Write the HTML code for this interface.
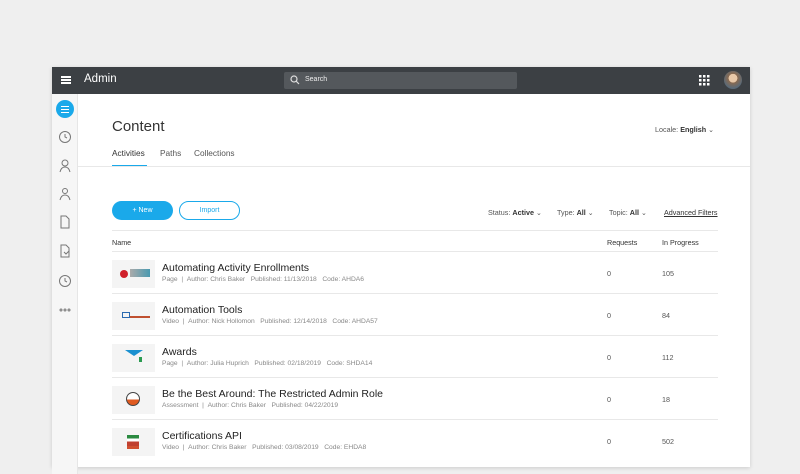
<!DOCTYPE html>
<html><head><meta charset="utf-8"><style>
*{margin:0;padding:0;box-sizing:border-box}
body{width:800px;height:451px;background:#efefef;font-family:"Liberation Sans",sans-serif;position:relative;overflow:hidden;color:#333}
.win{position:absolute;left:52px;top:67px;width:698px;height:400px;background:#fff;box-shadow:0 1px 4px rgba(0,0,0,.15)}
.top{position:absolute;left:0;top:0;width:698px;height:27px;background:#3c4044}
.side{position:absolute;left:0;top:27px;width:26px;height:380px;background:#f6f6f6;border-right:1px solid #e6e6e6}
.a{position:absolute;white-space:nowrap}
.line{position:absolute;height:1px;background:#e8e8e8}
.t{font-size:10.5px;color:#222}
.m{font-size:6.7px;color:#888}
.thumb{position:absolute;left:60px;width:43px;height:28px;background:#f4f4f4}
.num{font-size:7.2px;color:#555}
</style></head><body>
<div class="win">
<div class="top">
 <div class="a" style="left:9px;top:9px;width:10px;height:1.5px;background:#fff;box-shadow:0 3px 0 #fff,0 6px 0 #fff"></div>
 <div class="a" style="left:32px;top:6px;color:#fff;font-size:11.5px">Admin</div>
 <div class="a" style="left:232px;top:5px;width:233px;height:17px;background:#54585c;border-radius:2px"></div>
 <svg class="a" style="left:238px;top:8px" width="10" height="10"><circle cx="4" cy="4" r="3" stroke="#ddd" fill="none" stroke-width="1.2"/><line x1="6.3" y1="6.3" x2="9" y2="9" stroke="#ddd" stroke-width="1.2"/></svg>
 <div class="a" style="left:253px;top:8.5px;color:#eee;font-size:7px">Search</div>
 <svg class="a" style="left:647px;top:8px" width="11" height="11" fill="#fff"><rect x="0" y="0" width="2.5" height="2.5"/><rect x="4" y="0" width="2.5" height="2.5"/><rect x="8" y="0" width="2.5" height="2.5"/><rect x="0" y="4" width="2.5" height="2.5"/><rect x="4" y="4" width="2.5" height="2.5"/><rect x="8" y="4" width="2.5" height="2.5"/><rect x="0" y="8" width="2.5" height="2.5"/><rect x="4" y="8" width="2.5" height="2.5"/><rect x="8" y="8" width="2.5" height="2.5"/></svg>
 <div class="a" style="left:672px;top:4px;width:18px;height:18px;border-radius:50%;background:radial-gradient(circle at 50% 40%,#e8c8a8 30%,#8a6a50 32%,#5a6a78 70%)"></div>
</div>
<div class="side">
 <div class="a" style="left:4px;top:6px;width:18px;height:18px;border-radius:50%;background:#1aa9ea"></div>
 <div class="a" style="left:9px;top:12px;width:8px;height:1px;background:#fff;box-shadow:0 3px 0 #fff,0 6px 0 #fff"></div>
 <svg class="a" style="left:6px;top:36px" width="14" height="230" fill="none" stroke="#777" stroke-width="1">
  <circle cx="7" cy="7" r="5.5"/><path d="M7 4v3l2 1"/>
  <circle cx="7" cy="33" r="3"/><path d="M2 42c1-4 3-5 5-5s4 1 5 5"/>
  <circle cx="7" cy="61" r="2.5"/><path d="M2 70c1-4 3-5 5-5s4 1 5 5"/>
  <path d="M3 86h5l3 3v9H3z"/>
  <path d="M3 115h5l3 3v9H3z M6 122l2 2 3-3"/>
  <circle cx="7" cy="151" r="5.5"/><path d="M7 148v3l2 1"/>
  <circle cx="3" cy="180" r="1"/><circle cx="7" cy="180" r="1"/><circle cx="11" cy="180" r="1"/>
 </svg>
</div>
<div class="a" style="left:60px;top:51px;font-size:15px;color:#333">Content</div>
<div class="a" style="left:60px;top:81px;font-size:8.3px;color:#333">Activities</div>
<div class="a" style="left:108px;top:81px;font-size:8.3px;color:#555">Paths</div>
<div class="a" style="left:142px;top:81px;font-size:8.3px;color:#555">Collections</div>
<div class="a" style="left:60px;top:98px;width:35px;height:2px;background:#1aa9ea"></div>
<div class="line" style="left:26px;top:99px;width:672px"></div>
<div class="a" style="left:603px;top:58px;font-size:7.2px;color:#555">Locale: <b style="color:#333">English</b> ⌄</div>
<div class="a" style="left:60px;top:134px;width:61px;height:19px;border-radius:10px;background:#1aa9ea;color:#fff;font-size:7px;text-align:center;line-height:19px">+ New</div>
<div class="a" style="left:127px;top:134px;width:61px;height:19px;border-radius:10px;border:1px solid #1aa9ea;color:#1aa9ea;font-size:7px;text-align:center;line-height:17px">Import</div>
<div class="a" style="left:436px;top:141px;font-size:7.2px;color:#555">Status: <b style="color:#333">Active</b> ⌄</div>
<div class="a" style="left:505px;top:141px;font-size:7.2px;color:#555">Type: <b style="color:#333">All</b> ⌄</div>
<div class="a" style="left:557px;top:141px;font-size:7.2px;color:#555">Topic: <b style="color:#333">All</b> ⌄</div>
<div class="a" style="left:612px;top:141px;font-size:7.2px;color:#333;text-decoration:underline">Advanced Filters</div>
<div class="line" style="left:60px;top:163px;width:606px"></div>
<div class="a" style="left:60px;top:171px;font-size:7.2px;color:#333">Name</div>
<div class="a" style="left:555px;top:171px;font-size:7.2px;color:#333">Requests</div>
<div class="a" style="left:610px;top:171px;font-size:7.2px;color:#333">In Progress</div>
<div class="line" style="left:60px;top:184px;width:606px"></div>

<div class="thumb" style="top:193px"></div><div class="a" style="left:68px;top:203px;width:8px;height:8px;border-radius:50%;background:#d0202a"></div><div class="a" style="left:78px;top:202px;width:20px;height:8px;background:linear-gradient(90deg,#aaa,#4a9ab0)"></div>
<div class="a t" style="left:110px;top:195px">Automating Activity Enrollments</div>
<div class="a m" style="left:110px;top:209px">Page &nbsp;| &nbsp;Author: Chris Baker &nbsp;&nbsp;Published: 11/13/2018 &nbsp;&nbsp;Code: AHDA6</div>
<div class="a num" style="left:555px;top:202px">0</div><div class="a num" style="left:610px;top:202px">105</div>
<div class="line" style="left:60px;top:226px;width:606px"></div>

<div class="thumb" style="top:235px"></div><div class="a" style="left:70px;top:245px;width:8px;height:6px;border:1.5px solid #2a6ab0"></div><div class="a" style="left:78px;top:249px;width:20px;height:2px;background:#c05030"></div>
<div class="a t" style="left:110px;top:237px">Automation Tools</div>
<div class="a m" style="left:110px;top:251px">Video &nbsp;| &nbsp;Author: Nick Hollomon &nbsp;&nbsp;Published: 12/14/2018 &nbsp;&nbsp;Code: AHDA57</div>
<div class="a num" style="left:555px;top:244px">0</div><div class="a num" style="left:610px;top:244px">84</div>
<div class="line" style="left:60px;top:268px;width:606px"></div>

<div class="thumb" style="top:277px"></div><div class="a" style="left:73px;top:283px;width:0;height:0;border-left:9px solid transparent;border-right:9px solid transparent;border-bottom:6px solid #1a90d0;transform:rotate(180deg)"></div><div class="a" style="left:87px;top:290px;width:3px;height:5px;background:#2a9a50"></div>
<div class="a t" style="left:110px;top:279px">Awards</div>
<div class="a m" style="left:110px;top:293px">Page &nbsp;| &nbsp;Author: Julia Huprich &nbsp;&nbsp;Published: 02/18/2019 &nbsp;&nbsp;Code: SHDA14</div>
<div class="a num" style="left:555px;top:286px">0</div><div class="a num" style="left:610px;top:286px">112</div>
<div class="line" style="left:60px;top:310px;width:606px"></div>

<div class="thumb" style="top:319px"></div><div class="a" style="left:74px;top:325px;width:14px;height:14px;border-radius:50%;border:1.5px solid #444;background:linear-gradient(0deg,#e05a20 45%,#fff 45%)"></div>
<div class="a t" style="left:110px;top:321px">Be the Best Around: The Restricted Admin Role</div>
<div class="a m" style="left:110px;top:335px">Assessment &nbsp;| &nbsp;Author: Chris Baker &nbsp;&nbsp;Published: 04/22/2019</div>
<div class="a num" style="left:555px;top:328px">0</div><div class="a num" style="left:610px;top:328px">18</div>
<div class="line" style="left:60px;top:352px;width:606px"></div>

<div class="thumb" style="top:361px"></div><div class="a" style="left:75px;top:368px;width:12px;height:14px;border-bottom:3px solid #d05030;background:linear-gradient(#2a8a40 30%,#fff 30%,#fff 60%,#c04030 60%)"></div>
<div class="a t" style="left:110px;top:363px">Certifications API</div>
<div class="a m" style="left:110px;top:377px">Video &nbsp;| &nbsp;Author: Chris Baker &nbsp;&nbsp;Published: 03/08/2019 &nbsp;&nbsp;Code: EHDA8</div>
<div class="a num" style="left:555px;top:370px">0</div><div class="a num" style="left:610px;top:370px">502</div>
</div>
</body></html>
